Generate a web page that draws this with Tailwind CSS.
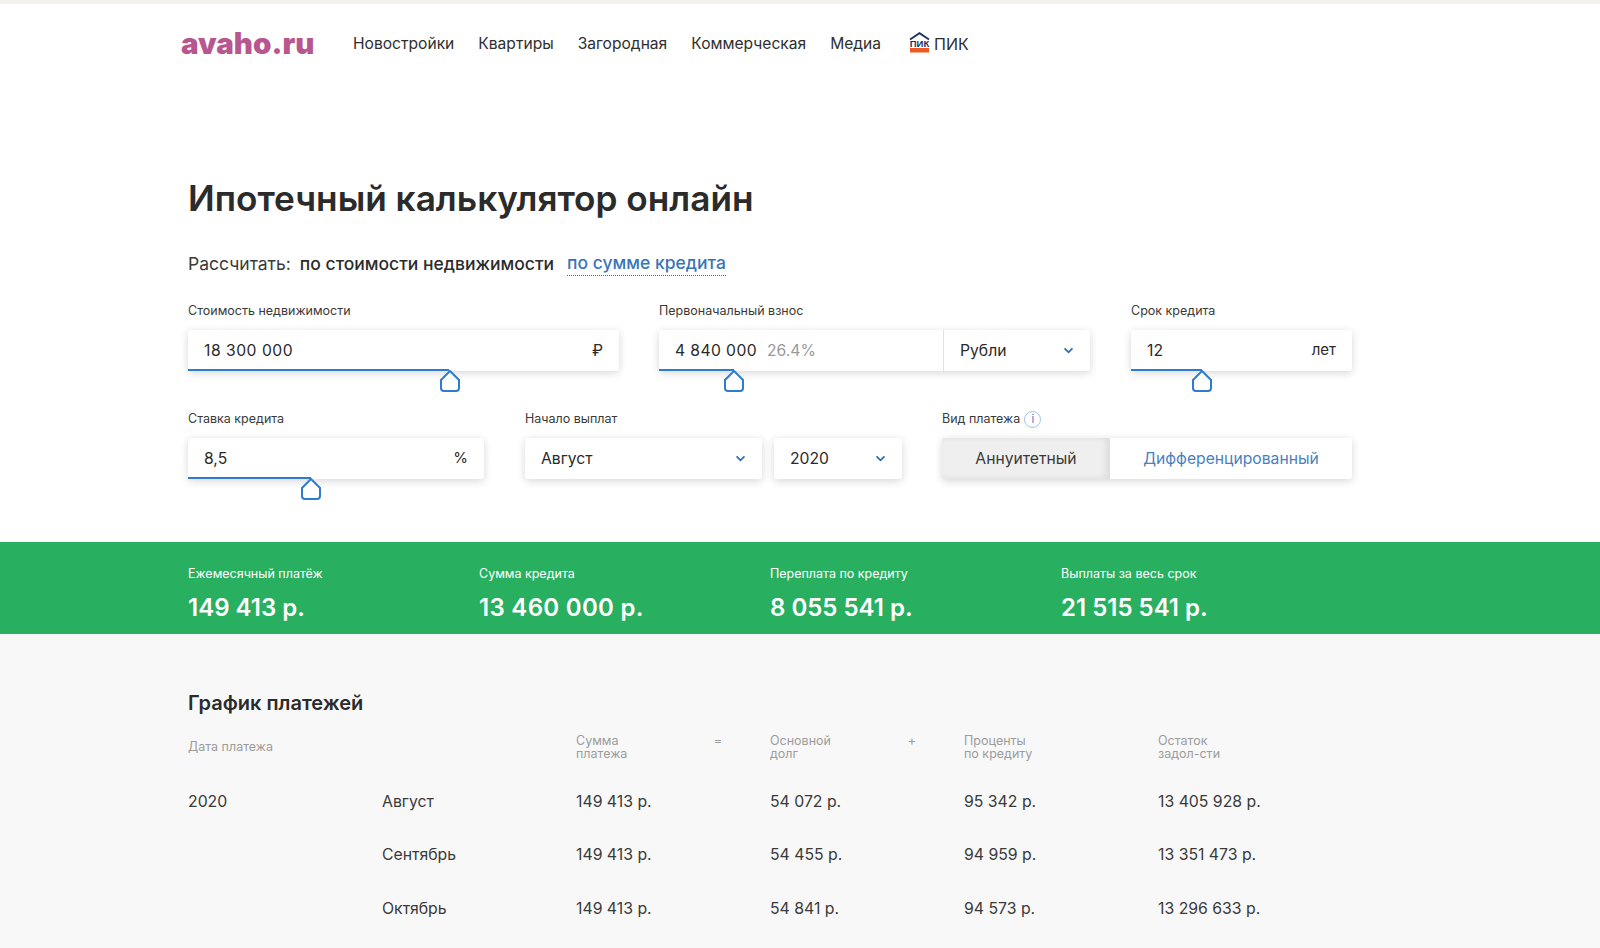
<!DOCTYPE html>
<html lang="ru">
<head>
    <meta charset="UTF-8">
    <meta name="viewport" content="width=device-width, initial-scale=1.0">
    <title>Ипотечный калькулятор онлайн</title>
    <script src="https://cdn.jsdelivr.net/npm/@tailwindcss/browser@4"></script>
</head>
<body class="bg-white h-[948px] overflow-hidden font-['Inter','Liberation_Sans',sans-serif] text-[#2a2a2a]">
    <div class="h-1 bg-[#f3f2ec]"></div>

    <header class="h-[80px] pl-[181px] flex items-center">
        <a class="text-[29.5px] font-black text-[#b8568f] w-[172px] leading-none">avaho.ru</a>
        <nav class="flex items-center gap-6 text-[15.6px] text-[#2f2f2f]">
            <a>Новостройки</a>
            <a>Квартиры</a>
            <a>Загородная</a>
            <a>Коммерческая</a>
            <a>Медиа</a>
            <a class="flex items-center gap-1 ml-1 text-[16px]">
                <svg class="-mt-1" width="21" height="21" viewBox="0 0 21 21">
                    <path d="M1 7.5 L10.5 1.2 L20 7.5" fill="none" stroke="#1d2f5f" stroke-width="1.8"/>
                    <text x="10.5" y="15" text-anchor="middle" font-size="9.5" font-weight="700" fill="#1d2f5f" font-family="Liberation Sans">ПИК</text>
                    <rect x="1" y="16" width="19" height="4.5" fill="#ee5a24"/>
                </svg>
                <span>ПИК</span>
            </a>
        </nav>
    </header>

    <main class="pl-[188px]">
        <h1 class="mt-[89px] text-[35.2px] leading-[50px] font-semibold text-[#2b2b2b]">Ипотечный калькулятор онлайн</h1>

        <div class="mt-[28px] flex items-center text-[17.5px] leading-6">
            <span class="text-[#3a3a3a] mr-[9px]">Рассчитать:</span>
            <span class="font-medium text-[#2b2b2b] mr-[13px]">по стоимости недвижимости</span>
            <a class="font-medium text-[#3a74b8] border-b border-dotted border-[#3a74b8]">по сумме кредита</a>
        </div>

        <!-- первая строка полей -->
        <div class="mt-[25px] flex">
            <div class="w-[431px] mr-[40px]">
                <label class="block text-[12.5px] leading-5 text-[#3a3a3a] mb-[9px]">Стоимость недвижимости</label>
                <div class="relative h-[41px] rounded-[3px] bg-white shadow-[0_2px_8px_rgba(0,0,0,0.16)] flex items-center justify-between px-4 text-[15.7px]">
                    <span class="tracking-[0.5px]">18 300 000</span>
                    <span>₽</span>
                    <div class="absolute left-0 bottom-0 h-0.5 w-[261px] bg-[#2f7bd0]"></div>
                    <svg class="absolute left-[252px] top-[40px]" width="20" height="22" viewBox="0 0 20 22"><path d="M10 1 L19 10 V18 Q19 21 16 21 H4 Q1 21 1 18 V10 Z" fill="#fff" stroke="#2f7bd0" stroke-width="2"/></svg>
                </div>
            </div>
            <div class="w-[431px] mr-[41px]">
                <label class="block text-[12.5px] leading-5 text-[#3a3a3a] mb-[9px]">Первоначальный взнос</label>
                <div class="relative h-[41px] rounded-[3px] bg-white shadow-[0_2px_8px_rgba(0,0,0,0.16)] flex items-center text-[15.7px]">
                    <div class="w-[285px] h-full flex items-center px-4 border-r border-[#e2e2e2]">
                        <span class="tracking-[0.4px]">4 840 000</span>
                        <span class="ml-[10px] text-[#9a9a9a]">26.4%</span>
                    </div>
                    <div class="flex-1 flex items-center justify-between pl-4 pr-4">
                        <span>Рубли</span>
                        <svg width="11" height="7" viewBox="0 0 12 8"><path d="M1.5 1.5 L6 6 L10.5 1.5" fill="none" stroke="#2f6db5" stroke-width="2"/></svg>
                    </div>
                    <div class="absolute left-0 bottom-0 h-0.5 w-[75px] bg-[#2f7bd0]"></div>
                    <svg class="absolute left-[65px] top-[40px]" width="20" height="22" viewBox="0 0 20 22"><path d="M10 1 L19 10 V18 Q19 21 16 21 H4 Q1 21 1 18 V10 Z" fill="#fff" stroke="#2f7bd0" stroke-width="2"/></svg>
                </div>
            </div>
            <div class="w-[221px]">
                <label class="block text-[12.5px] leading-5 text-[#3a3a3a] mb-[9px]">Срок кредита</label>
                <div class="relative h-[41px] rounded-[3px] bg-white shadow-[0_2px_8px_rgba(0,0,0,0.16)] flex items-center justify-between px-4 text-[15.7px]">
                    <span>12</span>
                    <span class="text-[15px]">лет</span>
                    <div class="absolute left-0 bottom-0 h-0.5 w-[71px] bg-[#2f7bd0]"></div>
                    <svg class="absolute left-[61px] top-[40px]" width="20" height="22" viewBox="0 0 20 22"><path d="M10 1 L19 10 V18 Q19 21 16 21 H4 Q1 21 1 18 V10 Z" fill="#fff" stroke="#2f7bd0" stroke-width="2"/></svg>
                </div>
            </div>
        </div>

        <!-- вторая строка полей -->
        <div class="mt-[38px] flex">
            <div class="w-[296px] mr-[41px]">
                <label class="block text-[12.5px] leading-5 text-[#3a3a3a] mb-[9px]">Ставка кредита</label>
                <div class="relative h-[41px] rounded-[3px] bg-white shadow-[0_2px_8px_rgba(0,0,0,0.16)] flex items-center justify-between px-4 text-[15.7px]">
                    <span>8,5</span>
                    <span class="text-[15px]">%</span>
                    <div class="absolute left-0 bottom-0 h-0.5 w-[123px] bg-[#2f7bd0]"></div>
                    <svg class="absolute left-[113px] top-[40px]" width="20" height="22" viewBox="0 0 20 22"><path d="M10 1 L19 10 V18 Q19 21 16 21 H4 Q1 21 1 18 V10 Z" fill="#fff" stroke="#2f7bd0" stroke-width="2"/></svg>
                </div>
            </div>
            <div class="w-[237px] mr-[12px]">
                <label class="block text-[12.5px] leading-5 text-[#3a3a3a] mb-[9px]">Начало выплат</label>
                <div class="h-[41px] rounded-[3px] bg-white shadow-[0_2px_8px_rgba(0,0,0,0.16)] flex items-center justify-between px-4 text-[15.7px]">
                    <span>Август</span>
                    <svg width="11" height="7" viewBox="0 0 12 8"><path d="M1.5 1.5 L6 6 L10.5 1.5" fill="none" stroke="#2f6db5" stroke-width="2"/></svg>
                </div>
            </div>
            <div class="w-[128px] mr-[40px] pt-[29px]">
                <div class="h-[41px] rounded-[3px] bg-white shadow-[0_2px_8px_rgba(0,0,0,0.16)] flex items-center justify-between px-4 text-[15.7px]">
                    <span>2020</span>
                    <svg width="11" height="7" viewBox="0 0 12 8"><path d="M1.5 1.5 L6 6 L10.5 1.5" fill="none" stroke="#2f6db5" stroke-width="2"/></svg>
                </div>
            </div>
            <div class="w-[410px]">
                <label class="flex items-center gap-1 text-[12.5px] leading-5 text-[#3a3a3a] mb-[9px]">
                    Вид платежа
                    <span class="w-[17px] h-[17px] rounded-full border border-[#9cc3ea] text-[#3a7cc4] text-[11px] leading-[15px] text-center">i</span>
                </label>
                <div class="h-[41px] rounded-[3px] bg-white shadow-[0_2px_8px_rgba(0,0,0,0.16)] flex text-[15.7px] overflow-hidden">
                    <div class="w-[168px] flex items-center justify-center bg-[#efefef] text-[#3a3a3a] shadow-[inset_-4px_0_6px_rgba(0,0,0,0.08)]">Аннуитетный</div>
                    <div class="flex-1 flex items-center justify-center text-[#4a7fc0]">Дифференцированный</div>
                </div>
            </div>
        </div>
    </main>

    <section class="mt-[63px] h-[92px] bg-[#29af60] text-white pl-[188px] grid grid-cols-[291px_291px_291px_291px] pt-[22px]">
        <div>
            <div class="text-[12.5px] leading-5">Ежемесячный платёж</div>
            <div class="mt-[8px] text-2xl leading-8 font-semibold">149 413 р.</div>
        </div>
        <div>
            <div class="text-[12.5px] leading-5">Сумма кредита</div>
            <div class="mt-[8px] text-2xl leading-8 font-semibold tracking-[0.3px]">13 460 000 р.</div>
        </div>
        <div>
            <div class="text-[12.5px] leading-5">Переплата по кредиту</div>
            <div class="mt-[8px] text-2xl leading-8 font-semibold">8 055 541 р.</div>
        </div>
        <div>
            <div class="text-[12.5px] leading-5">Выплаты за весь срок</div>
            <div class="mt-[8px] text-2xl leading-8 font-semibold">21 515 541 р.</div>
        </div>
    </section>

    <section class="bg-[#f8f8f8] h-[320px] pl-[188px] pt-[55px]">
        <h2 class="text-[20px] leading-7 font-semibold text-[#2b2b2b]">График платежей</h2>

        <div class="mt-[18px] grid grid-cols-[194px_194px_194px_194px_194px_194px] text-[12.5px] leading-[12.5px] text-[#9c9c9c] items-center">
            <div>Дата платежа</div>
            <div></div>
            <div class="flex justify-between pr-[48px]"><span>Сумма<br>платежа</span><span>=</span></div>
            <div class="flex justify-between pr-[48px]"><span>Основной<br>долг</span><span>+</span></div>
            <div>Проценты<br>по кредиту</div>
            <div>Остаток<br>задол-сти</div>
        </div>

        <div class="mt-[15px] grid grid-cols-[194px_194px_194px_194px_194px_194px] auto-rows-[53.5px] items-center text-[15.8px] text-[#3a3a3a]">
            <div>2020</div><div>Август</div><div>149 413 р.</div><div>54 072 р.</div><div>95 342 р.</div><div>13 405 928 р.</div>
            <div></div><div>Сентябрь</div><div>149 413 р.</div><div>54 455 р.</div><div>94 959 р.</div><div>13 351 473 р.</div>
            <div></div><div>Октябрь</div><div>149 413 р.</div><div>54 841 р.</div><div>94 573 р.</div><div>13 296 633 р.</div>
        </div>
    </section>
</body>
</html>
